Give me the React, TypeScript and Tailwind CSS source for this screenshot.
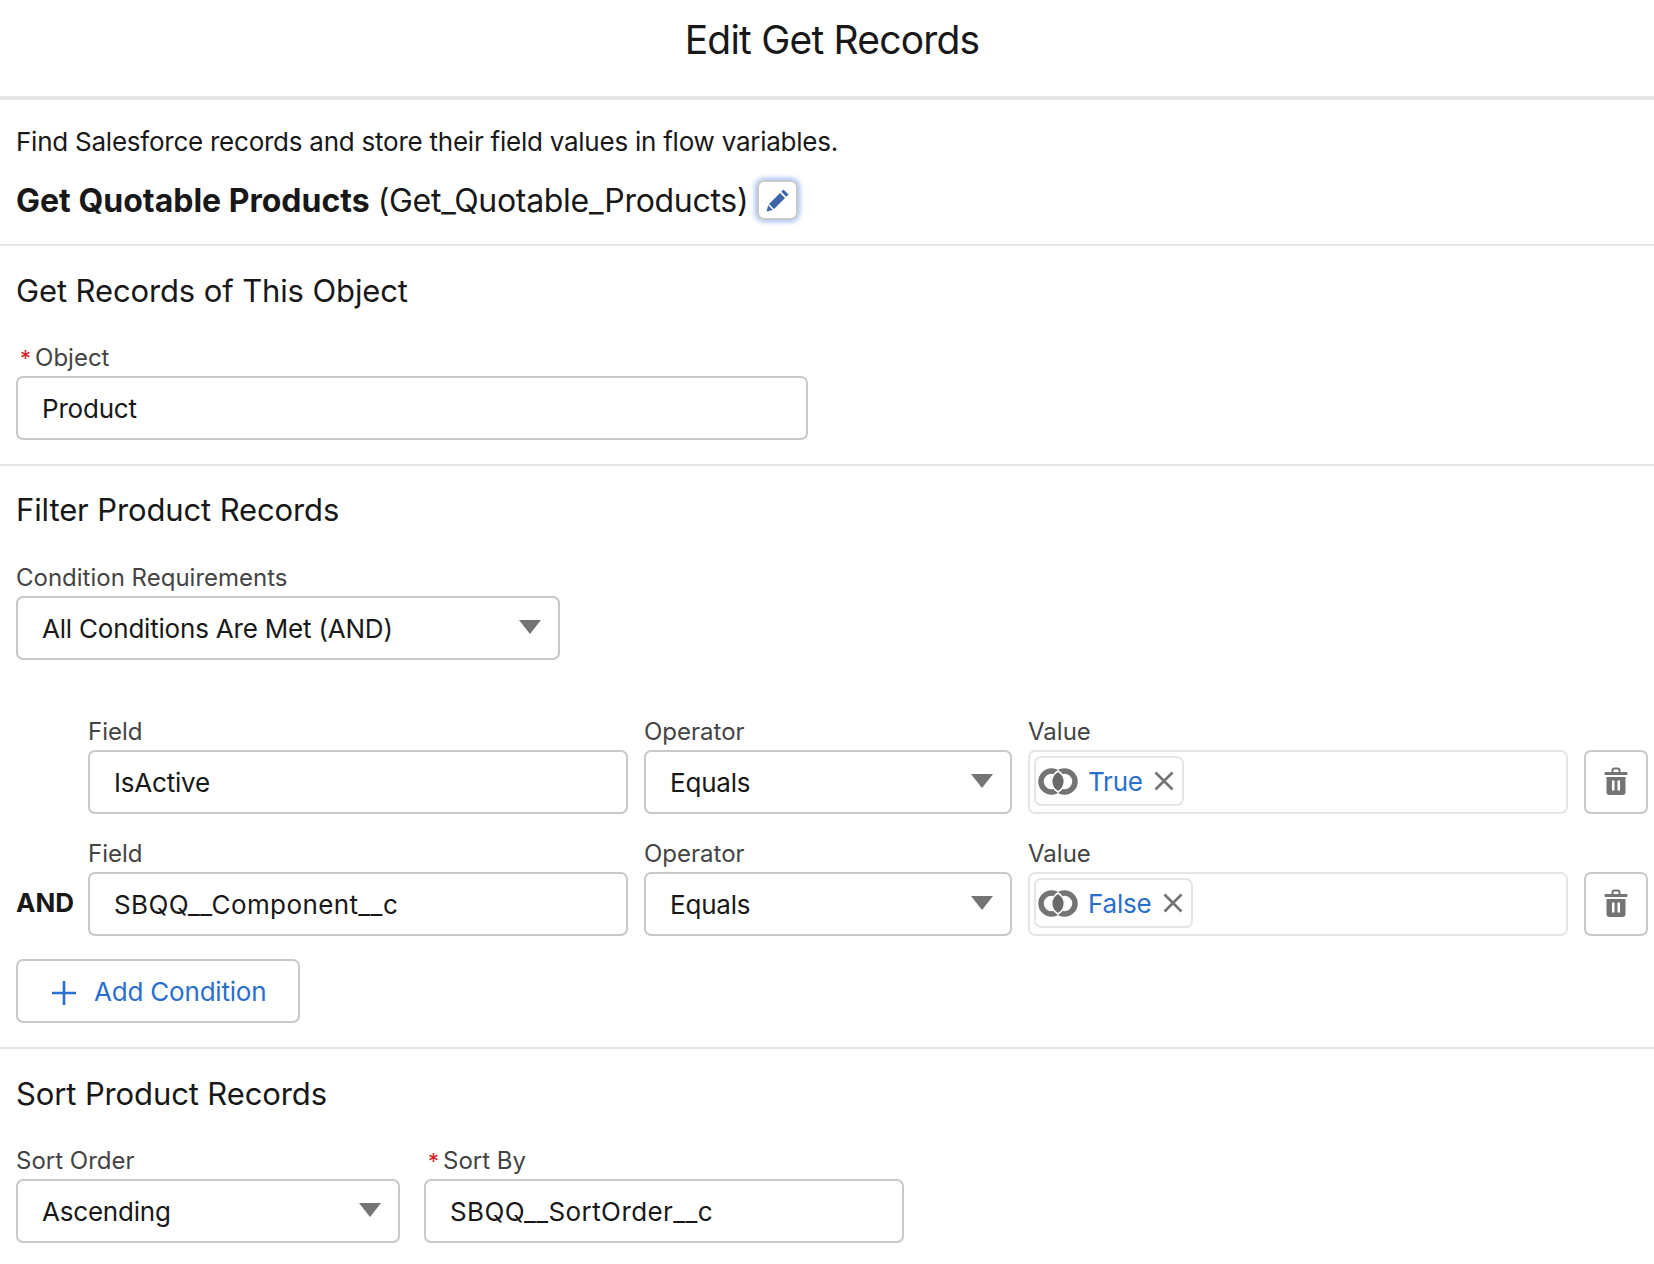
// Edit Get Records - flow builder element panel

const FONT = "font-['Inter',sans-serif]";

function Required() {
    return <span className="text-[#d4161c] mr-[4px] ml-[4px] text-[22px] leading-none">*</span>;
}

function FieldLabel({ text, required }: { text: string; required?: boolean }) {
    return (
        <div className="h-[26px] mb-[5px] flex items-center text-[24px] text-[#444444] whitespace-nowrap">
            {required && <Required />}
            {text}
        </div>
    );
}

function TextBox({ value, className = 'tracking-[-0.2px]' }: { value: string; className?: string }) {
    return (
        <div className={`h-[64px] border-2 border-[#c9c9c9] rounded-[7px] bg-white pl-[24px] flex items-center text-[26px] text-[#181818] whitespace-nowrap ${className}`}>
            {value}
        </div>
    );
}

function SelectBox({ value, className = '' }: { value: string; className?: string }) {
    return (
        <div className={`h-[64px] border-2 border-[#c9c9c9] rounded-[7px] bg-white pl-[24px] pr-[17px] flex items-center justify-between text-[26px] text-[#181818] tracking-[-0.2px] whitespace-nowrap ${className}`}>
            {value}
            <svg width="22" height="14" viewBox="0 0 22 14" className="mb-[2px]">
                <path d="M0 0h22L11 14z" fill="#747474" />
            </svg>
        </div>
    );
}

function LinkIcon() {
    return (
        <svg width="40" height="27" viewBox="0 0 40 27" fill="none">
            <circle cx="13.500" cy="13.500" r="10.500" stroke="#747474" strokeWidth="5.500" />
            <circle cx="26.500" cy="13.500" r="10.500" stroke="#747474" strokeWidth="5.500" />
            <path d="M20 3C28.500 8 28.500 19 20 24C11.500 19 11.500 8 20 3z" fill="#6a6a6a" stroke="#ffffff" strokeWidth="1.600" />
        </svg>
    );
}

function ValuePill({ text }: { text: string }) {
    return (
        <div className="h-[50px] w-fit border-2 border-[#e5e5e5] rounded-[7px] bg-white pl-[2px] pr-[8px] flex items-center">
            <LinkIcon />
            <span className="ml-[10px] text-[26px] text-[#2a6fd0] tracking-[-0.2px]">{text}</span>
            <svg width="20" height="20" viewBox="0 0 20 20" className="ml-[11px]">
                <path d="M1.500 1.500l17 17M18.500 1.500l-17 17" stroke="#747474" strokeWidth="2.600" />
            </svg>
        </div>
    );
}

function TrashButton() {
    return (
        <div className="h-[64px] border-2 border-[#c9c9c9] rounded-[7px] bg-white flex items-center justify-center">
            <svg width="24" height="28" viewBox="0 0 24 28" className="mb-[2px]">
                <path d="M8.500 5V3.500a2 2 0 0 1 2-2h3a2 2 0 0 1 2 2V5" fill="none" stroke="#747474" strokeWidth="2" />
                <rect x="0.500" y="5" width="23" height="3" rx="1" fill="#747474" />
                <path fillRule="evenodd" d="M2.500 10h19v15a3 3 0 0 1-3 3h-13a3 3 0 0 1-3-3zM8 13.500v10h2.500v-10zM13.500 13.500v10H16v-10z" fill="#747474" />
            </svg>
        </div>
    );
}

function ConditionRow({ field, value, prefix }: { field: string; value: string; prefix?: string }) {
    return (
        <div className="flex">
            <div className="w-[72px] shrink-0 flex flex-col justify-end">
                {prefix && <div className="h-[64px] pb-[4px] flex items-center font-bold text-[26px] text-[#181818]">{prefix}</div>}
            </div>
            <div className="grid grid-cols-[540px_368px_540px_64px] gap-x-[16px]">
                <div>
                    <FieldLabel text="Field" />
                    <TextBox value={field} className={field.includes('__') ? 'tracking-[0.4px]' : 'tracking-[-0.2px]'} />
                </div>
                <div>
                    <FieldLabel text="Operator" />
                    <SelectBox value="Equals" />
                </div>
                <div>
                    <FieldLabel text="Value" />
                    <div className="h-[64px] border-2 border-[#e5e5e5] rounded-[7px] bg-white pl-[4px] pb-[2px] flex items-center">
                        <ValuePill text={value} />
                    </div>
                </div>
                <div className="pt-[31px]">
                    <TrashButton />
                </div>
            </div>
        </div>
    );
}

export default function App() {
    return (
        <div className={`${FONT} w-[1654px] h-[1264px] bg-white overflow-hidden text-[#181818]`}>
            {/* Header */}
            <header className="h-[100px] border-b-4 border-[#e5e5e5] flex items-center justify-center">
                <h1 className="text-[39px] font-normal mb-[16px] ml-[10px] tracking-[-0.8px]">Edit Get Records</h1>
            </header>

            {/* Name */}
            <section className="h-[146px] border-b-2 border-[#e5e5e5] px-[16px] pt-[28px]">
                <p className="h-[28px] leading-[28px] text-[26px] tracking-[-0.24px]">Find Salesforce records and store their field values in flow variables.</p>
                <div className="mt-[25px] h-[40px] flex items-center text-[32px]">
                    <span className="font-bold">Get Quotable Products</span>
                    <span className="ml-[8px] tracking-[-0.3px]">(Get_Quotable_Products)</span>
                    <div className="ml-[9px] mb-[2px] w-[41px] h-[40px] border-2 border-[#c9c9c9] rounded-[7px] shadow-[0_0_5px_2px_rgba(90,140,230,0.55)] flex items-center justify-center">
                        <svg width="24" height="24" viewBox="0 0 24 24">
                            <path d="M17.500 1.500l5 5-2.200 2.200-5-5zM14 4.900l5 5L8 21l-5-5zM2.200 17.300l4.600 4.600L0.500 23.500z" fill="#3d64a8" />
                        </svg>
                    </div>
                </div>
            </section>

            {/* Object */}
            <section className="border-b-2 border-[#e5e5e5] px-[16px] pt-[27px] pb-[24px]">
                <h2 className="h-[36px] leading-[36px] text-[31px] font-normal tracking-[-0.12px]">Get Records of This Object</h2>
                <div className="mt-[36px]">
                    <FieldLabel text="Object" required />
                    <TextBox value="Product" className="w-[792px] tracking-[-0.2px]" />
                </div>
            </section>

            {/* Filter */}
            <section className="border-b-2 border-[#e5e5e5] px-[16px] pt-[26px] pb-[24px]">
                <h2 className="h-[36px] leading-[36px] text-[31px] font-normal tracking-[-0.12px]">Filter Product Records</h2>
                <div className="mt-[37px]">
                    <FieldLabel text="Condition Requirements" />
                    <SelectBox value="All Conditions Are Met (AND)" className="w-[544px]" />
                </div>
                <div className="mt-[59px] flex flex-col gap-y-[27px]">
                    <ConditionRow field="IsActive" value="True" />
                    <ConditionRow field="SBQQ__Component__c" value="False" prefix="AND" />
                </div>
                <div className="mt-[23px] w-[284px] h-[64px] border-2 border-[#c9c9c9] rounded-[7px] pl-[34px] flex items-center text-[26px] text-[#2a6fd0] tracking-[-0.2px]">
                    <svg width="24" height="24" viewBox="0 0 24 24" className="mt-[4px]">
                        <path d="M12 0v24M0 12h24" stroke="#2a6fd0" strokeWidth="2.600" />
                    </svg>
                    <span className="ml-[18px]">Add Condition</span>
                </div>
            </section>

            {/* Sort */}
            <section className="px-[16px] pt-[27px]">
                <h2 className="h-[36px] leading-[36px] text-[31px] font-normal tracking-[-0.12px]">Sort Product Records</h2>
                <div className="mt-[36px] flex gap-x-[24px]">
                    <div className="w-[384px]">
                        <FieldLabel text="Sort Order" />
                        <SelectBox value="Ascending" />
                    </div>
                    <div className="w-[480px]">
                        <FieldLabel text="Sort By" required />
                        <TextBox value="SBQQ__SortOrder__c" className="tracking-[0.4px]" />
                    </div>
                </div>
            </section>
        </div>
    );
}
